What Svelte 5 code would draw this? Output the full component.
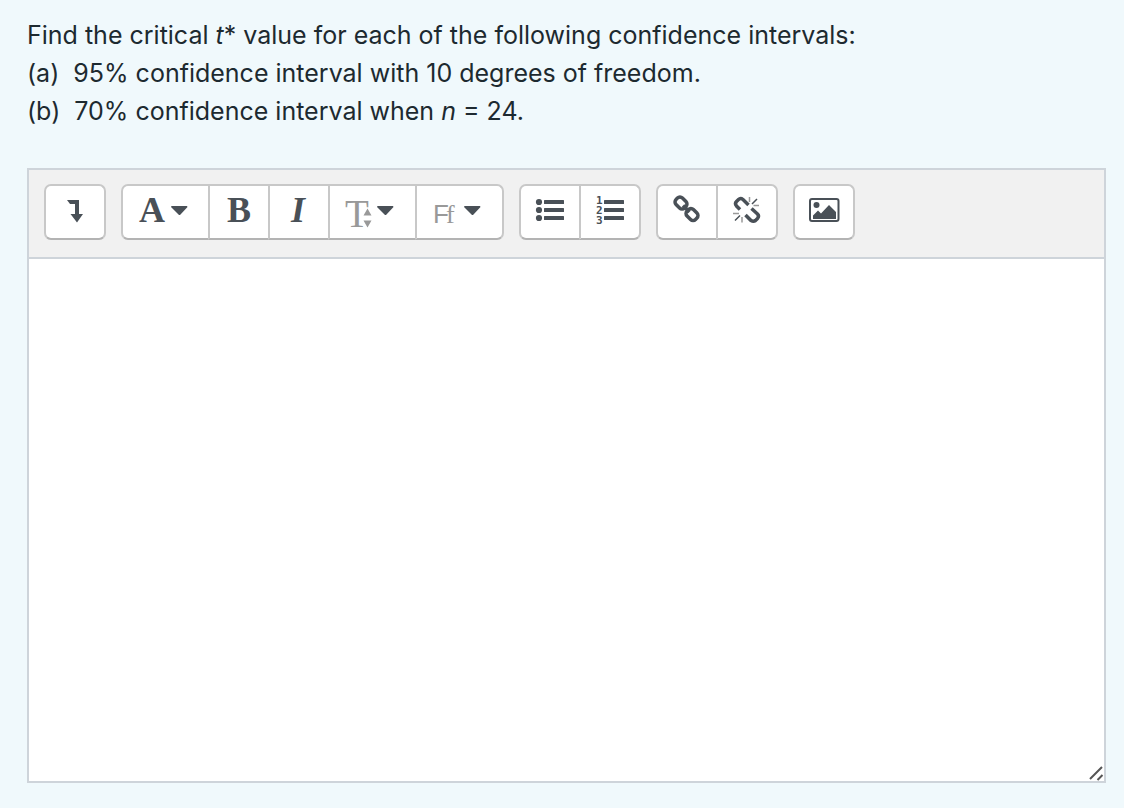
<script>
  let answer = $state('');

  // drawings share one 52px high canvas, wide ones make room for the caret
  const groups = [
    [{ id: 'toggle', title: 'Show more buttons' }],
    [
      { id: 'styles', title: 'Paragraph styles', menu: 48 },
      { id: 'bold', title: 'Bold' },
      { id: 'italic', title: 'Italic' },
      { id: 'size', title: 'Font size', menu: 47 },
      { id: 'family', title: 'Font family', menu: 47 }
    ],
    [
      { id: 'bullets', title: 'Unordered list' },
      { id: 'numbers', title: 'Ordered list' }
    ],
    [
      { id: 'link', title: 'Link' },
      { id: 'unlink', title: 'Unlink' }
    ],
    [{ id: 'image', title: 'Insert image' }]
  ];
</script>

<main>
  <div class="question" id="question">
    <p>Find the critical <em>t</em>* value for each of the following confidence intervals:</p>
    <p>(a)&nbsp; 95% confidence interval with 10 degrees of freedom.</p>
    <p>(b)&nbsp; 70% confidence interval when <em>n</em> = 24.</p>
  </div>

  <div class="editor">
    <div class="toolbar" role="toolbar" aria-label="Editor">
      {#each groups as group}
        <div class="group">
          {#each group as { id, title, menu }}
            <button type="button" aria-label={title} aria-haspopup={menu ? 'menu' : undefined}>
              <svg width={menu ? 85 : 58} height="52" aria-hidden="true">
                {#if id === 'toggle'}
                  <path d="M21 14h12v14h4l-6 8.500-6.500-8.500h4.500v-10h-5z" />
                {:else if id === 'styles'}
                  <text class="letter" x="16" y="36">A</text>
                {:else if id === 'bold'}
                  <text class="letter" x="17" y="36">B</text>
                {:else if id === 'italic'}
                  <text class="letter slanted" x="21" y="36">I</text>
                {:else if id === 'size'}
                  <text class="tall" x="15" y="41">T</text>
                  <path class="faded" d="M37.500 22.500l4 7h-8zM37.500 41.500l4-7h-8z" />
                {:else if id === 'family'}
                  <text class="sans" x="16" y="37">F<tspan class="serif" x="29">f</tspan></text>
                {:else if id === 'bullets'}
                  {#each [16, 24, 32] as y}
                    <circle cx="18" cy={y} r="3.100" />
                    <rect x="23" y={y - 2} width="20" height="4" rx="0.500" />
                  {/each}
                {:else if id === 'numbers'}
                  <text class="digit">
                    {#each [1, 2, 3] as n}
                      <tspan x="15" y={8 + n * 10}>{n}</tspan>
                    {/each}
                  </text>
                  {#each [16, 24, 32] as y}
                    <rect x="23" y={y - 2} width="20" height="4" rx="0.500" />
                  {/each}
                {:else if id === 'link'}
                  <g class="chain">
                    <rect x="17" y="12.500" width="12" height="9" rx="3.500" transform="rotate(45 23 17)" />
                    <rect x="28" y="24" width="12" height="9" rx="3.500" transform="rotate(45 34 28.500)" />
                    <path d="M25 19.500l6.500 6.500" />
                  </g>
                {:else if id === 'unlink'}
                  <g class="chain">
                    <path d="M22 23.500l-3.500-3.500q-2-2.500 0-4.500l2-2q2-2 4.500 0l5.500 5.500" />
                    <path d="M33.500 22.500l6 5.500q2 2 0 4.500l-2 2q-2 1.500-4.500 0l-5.500-5.500" />
                  </g>
                  <path class="rays" d="M31.500 11v5M35.500 19.500h5.500M15 27.500h6M24 31v5.500" />
                  <path class="ray" d="M34 18l5-5M17 34.500l5-5" />
                {:else}
                  <rect class="frame" x="15" y="13" width="28.500" height="22" rx="2" />
                  <circle cx="21.500" cy="19" r="3" />
                  <path d="M18 33v-3.500l5-5 3 3 8-8.500 7 7v7z" />
                {/if}
                {#if menu}
                  <path class="caret" d="M{menu + 0.5} 20h15.500l.5 1-7.500 8h-1l-8-8z" />
                {/if}
              </svg>
            </button>
          {/each}
        </div>
      {/each}
    </div>

    <div class="field">
      <textarea rows="13" aria-labelledby="question" bind:value={answer}></textarea>
      <svg class="grip" width="16" height="16" aria-hidden="true">
        <path d="M2 14L14 2M9.500 15l5-5" />
      </svg>
    </div>
  </div>
</main>

<style>
  :global(body) {
    margin: 0;
    background: #f0f9fc;
  }

  main {
    padding: 16px 18px 24px 27px;
    color: #1d2a30;
    font-family: Inter, "Liberation Sans", sans-serif;
    font-size: 25px;
    line-height: 38px;
  }

  .question {
    margin-bottom: 38px;
  }

  p {
    margin: 0;
  }

  .editor {
    border: 2px solid #ced4da;
  }

  .toolbar {
    display: flex;
    flex-wrap: wrap;
    gap: 15px;
    padding: 14px 15px 17px;
    background: #f1f1f1;
    border-bottom: 2px solid #ced4da;
  }

  .group {
    display: flex;
  }

  button {
    display: block;
    margin: 0 0 0 -2px;
    padding: 0;
    background: #fff;
    border: 2px solid #c8c8c8;
    border-bottom-color: #b3b3b3;
    cursor: pointer;
  }

  button:first-child {
    margin-left: 0;
    border-top-left-radius: 7px;
    border-bottom-left-radius: 7px;
  }

  button:last-child {
    border-top-right-radius: 7px;
    border-bottom-right-radius: 7px;
  }

  button:hover {
    background: #f7f7f7;
  }

  button svg {
    display: block;
    fill: #495057;
  }

  .letter {
    font: bold 36px "Liberation Serif", serif;
  }

  .slanted {
    font-style: italic;
  }

  .tall {
    font: 39px "Liberation Serif", serif;
    fill: #999;
  }

  .sans {
    font: 26px "Liberation Sans", sans-serif;
    fill: #999;
  }

  .serif {
    font: 26px "Liberation Serif", serif;
  }

  .digit {
    font: bold 11px "DejaVu Sans Mono", monospace;
  }

  .faded {
    fill: #999;
  }

  .chain {
    fill: none;
    stroke: #495057;
    stroke-width: 3.5;
  }

  .rays,
  .ray {
    fill: none;
    stroke: #999;
    stroke-width: 1.5;
  }

  .ray {
    stroke: #495057;
  }

  .frame {
    fill: none;
    stroke: #495057;
    stroke-width: 2;
  }

  .field {
    position: relative;
    background: #fff;
  }

  textarea {
    display: block;
    box-sizing: border-box;
    width: 100%;
    margin: 0;
    padding: 14px 16px;
    border: 0;
    outline: 0;
    resize: none;
    background: transparent;
    color: inherit;
    font: inherit;
  }

  .grip {
    position: absolute;
    right: 0;
    bottom: 0;
    fill: none;
    stroke: #555;
    stroke-width: 2;
    pointer-events: none;
  }
</style>
